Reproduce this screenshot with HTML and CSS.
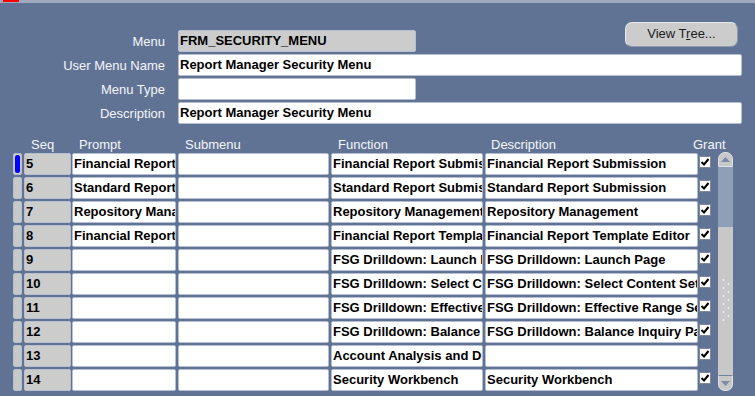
FILE: index.html
```html
<!DOCTYPE html>
<html lang="en">
<head>
    <meta charset="UTF-8">
    <title>Menus</title>
    <link rel="stylesheet" href="styles.css">
</head>
<body>

    <div class="titlebar"><span class="close-mark"></span></div>

    <div class="form">
        <div class="top-row">
            <div class="field-row">
                <span class="label">Menu</span>
                <div class="field short readonly">FRM_SECURITY_MENU</div>
            </div>
            <button class="tree-btn">View T<u>r</u>ee...</button>
        </div>
        <div class="field-row">
            <span class="label">User Menu Name</span>
            <div class="field long">Report Manager Security Menu</div>
        </div>
        <div class="field-row">
            <span class="label">Menu Type</span>
            <div class="field short"></div>
        </div>
        <div class="field-row">
            <span class="label">Description</span>
            <div class="field long">Report Manager Security Menu</div>
        </div>
    </div>

    <div class="grid">
        <div class="grid-head">
            <span class="h-ind"></span>
            <span class="h-seq">Seq</span>
            <span class="h-prompt">Prompt</span>
            <span class="h-submenu">Submenu</span>
            <span class="h-function">Function</span>
            <span class="h-desc">Description</span>
            <span class="h-grant">Grant</span>
        </div>

        <div class="grid-body">
            <div class="rows">
                <div class="row current">
                    <div class="ind"></div>
                    <div class="cell seq">5</div>
                    <div class="cell prompt">Financial Report Submission</div>
                    <div class="cell submenu"></div>
                    <div class="cell function">Financial Report Submission</div>
                    <div class="cell desc">Financial Report Submission</div>
                    <div class="grant"><svg width="12" height="12" viewBox="0 0 12 12"><rect x="0.5" y="0.5" width="11" height="11" fill="#fff" stroke="#7d8797"/><path d="M2.5 6 L5 8.5 L9.5 3" fill="none" stroke="#000" stroke-width="2"/></svg></div>
                </div>
                <div class="row">
                    <div class="ind"></div>
                    <div class="cell seq">6</div>
                    <div class="cell prompt">Standard Report Submission</div>
                    <div class="cell submenu"></div>
                    <div class="cell function">Standard Report Submission</div>
                    <div class="cell desc">Standard Report Submission</div>
                    <div class="grant"><svg width="12" height="12" viewBox="0 0 12 12"><rect x="0.5" y="0.5" width="11" height="11" fill="#fff" stroke="#7d8797"/><path d="M2.5 6 L5 8.5 L9.5 3" fill="none" stroke="#000" stroke-width="2"/></svg></div>
                </div>
                <div class="row">
                    <div class="ind"></div>
                    <div class="cell seq">7</div>
                    <div class="cell prompt">Repository Management</div>
                    <div class="cell submenu"></div>
                    <div class="cell function">Repository Management</div>
                    <div class="cell desc">Repository Management</div>
                    <div class="grant"><svg width="12" height="12" viewBox="0 0 12 12"><rect x="0.5" y="0.5" width="11" height="11" fill="#fff" stroke="#7d8797"/><path d="M2.5 6 L5 8.5 L9.5 3" fill="none" stroke="#000" stroke-width="2"/></svg></div>
                </div>
                <div class="row">
                    <div class="ind"></div>
                    <div class="cell seq">8</div>
                    <div class="cell prompt">Financial Report Template Editor</div>
                    <div class="cell submenu"></div>
                    <div class="cell function">Financial Report Template Editor</div>
                    <div class="cell desc">Financial Report Template Editor</div>
                    <div class="grant"><svg width="12" height="12" viewBox="0 0 12 12"><rect x="0.5" y="0.5" width="11" height="11" fill="#fff" stroke="#7d8797"/><path d="M2.5 6 L5 8.5 L9.5 3" fill="none" stroke="#000" stroke-width="2"/></svg></div>
                </div>
                <div class="row">
                    <div class="ind"></div>
                    <div class="cell seq">9</div>
                    <div class="cell prompt"></div>
                    <div class="cell submenu"></div>
                    <div class="cell function">FSG Drilldown: Launch Page</div>
                    <div class="cell desc">FSG Drilldown: Launch Page</div>
                    <div class="grant"><svg width="12" height="12" viewBox="0 0 12 12"><rect x="0.5" y="0.5" width="11" height="11" fill="#fff" stroke="#7d8797"/><path d="M2.5 6 L5 8.5 L9.5 3" fill="none" stroke="#000" stroke-width="2"/></svg></div>
                </div>
                <div class="row">
                    <div class="ind"></div>
                    <div class="cell seq">10</div>
                    <div class="cell prompt"></div>
                    <div class="cell submenu"></div>
                    <div class="cell function">FSG Drilldown: Select Content Set</div>
                    <div class="cell desc">FSG Drilldown: Select Content Set</div>
                    <div class="grant"><svg width="12" height="12" viewBox="0 0 12 12"><rect x="0.5" y="0.5" width="11" height="11" fill="#fff" stroke="#7d8797"/><path d="M2.5 6 L5 8.5 L9.5 3" fill="none" stroke="#000" stroke-width="2"/></svg></div>
                </div>
                <div class="row">
                    <div class="ind"></div>
                    <div class="cell seq">11</div>
                    <div class="cell prompt"></div>
                    <div class="cell submenu"></div>
                    <div class="cell function">FSG Drilldown: Effective Range Selection</div>
                    <div class="cell desc">FSG Drilldown: Effective Range Selection</div>
                    <div class="grant"><svg width="12" height="12" viewBox="0 0 12 12"><rect x="0.5" y="0.5" width="11" height="11" fill="#fff" stroke="#7d8797"/><path d="M2.5 6 L5 8.5 L9.5 3" fill="none" stroke="#000" stroke-width="2"/></svg></div>
                </div>
                <div class="row">
                    <div class="ind"></div>
                    <div class="cell seq">12</div>
                    <div class="cell prompt"></div>
                    <div class="cell submenu"></div>
                    <div class="cell function">FSG Drilldown: Balance Inquiry Page</div>
                    <div class="cell desc">FSG Drilldown: Balance Inquiry Page</div>
                    <div class="grant"><svg width="12" height="12" viewBox="0 0 12 12"><rect x="0.5" y="0.5" width="11" height="11" fill="#fff" stroke="#7d8797"/><path d="M2.5 6 L5 8.5 L9.5 3" fill="none" stroke="#000" stroke-width="2"/></svg></div>
                </div>
                <div class="row">
                    <div class="ind"></div>
                    <div class="cell seq">13</div>
                    <div class="cell prompt"></div>
                    <div class="cell submenu"></div>
                    <div class="cell function">Account Analysis and Drilldown</div>
                    <div class="cell desc"></div>
                    <div class="grant"><svg width="12" height="12" viewBox="0 0 12 12"><rect x="0.5" y="0.5" width="11" height="11" fill="#fff" stroke="#7d8797"/><path d="M2.5 6 L5 8.5 L9.5 3" fill="none" stroke="#000" stroke-width="2"/></svg></div>
                </div>
                <div class="row">
                    <div class="ind"></div>
                    <div class="cell seq">14</div>
                    <div class="cell prompt"></div>
                    <div class="cell submenu"></div>
                    <div class="cell function">Security Workbench</div>
                    <div class="cell desc">Security Workbench</div>
                    <div class="grant"><svg width="12" height="12" viewBox="0 0 12 12"><rect x="0.5" y="0.5" width="11" height="11" fill="#fff" stroke="#7d8797"/><path d="M2.5 6 L5 8.5 L9.5 3" fill="none" stroke="#000" stroke-width="2"/></svg></div>
                </div>
            </div>

            <div class="scrollbar">
                <div class="sb-up"><svg width="9" height="5" viewBox="0 0 9 5"><path d="M0 5 L4.5 0 L9 5 Z" fill="#7c8ca6"/></svg></div>
                <div class="sb-track"></div>
                <div class="sb-thumb">
                    <svg width="8" height="46" viewBox="0 0 8 46">
                        <g fill="#eef0f4">
                            <circle cx="1.5" cy="2" r="1"/><circle cx="6.5" cy="6" r="1"/>
                            <circle cx="1.5" cy="10" r="1"/><circle cx="6.5" cy="14" r="1"/>
                            <circle cx="1.5" cy="18" r="1"/><circle cx="6.5" cy="22" r="1"/>
                            <circle cx="1.5" cy="26" r="1"/><circle cx="6.5" cy="30" r="1"/>
                            <circle cx="1.5" cy="34" r="1"/><circle cx="6.5" cy="38" r="1"/>
                            <circle cx="1.5" cy="42" r="1"/>
                        </g>
                    </svg>
                </div>
                <div class="sb-down"><svg width="9" height="5" viewBox="0 0 9 5"><path d="M0 0 L9 0 L4.5 5 Z" fill="#7c8ca6"/></svg></div>
            </div>
        </div>
    </div>

</body>
</html>
```

FILE: styles.css
```css
body {
    margin: 0;
    width: 755px;
    height: 396px;
    overflow: hidden;
    background-color: #617394;
    font-family: "Liberation Sans", Arial, sans-serif;
    font-size: 13px;
    color: #fff;
}
.titlebar {
    height: 3px;
    padding-left: 3px;
    background-color: #9eaabb;
}
.close-mark {
    display: block;
    width: 16px;
    height: 2px;
    background-color: #f00;
}
.form {
    padding-top: 19px;
}
.top-row {
    display: flex;
    align-items: flex-start;
}
.top-row .field-row {
    margin-top: 8px;
}
.field-row {
    display: flex;
    align-items: center;
    height: 22px;
    margin-top: 2px;
}
.label {
    width: 165px;
    margin-right: 13px;
    text-align: right;
    color: #f4f6f8;
}
.field {
    box-sizing: border-box;
    height: 22px;
    padding: 0 1px;
    line-height: 20px;
    background-color: #fff;
    border: 1px solid #b4bfcf;
    border-radius: 2px;
    color: #000;
    font-weight: bold;
    white-space: nowrap;
    overflow: hidden;
}
.field.short {
    width: 238px;
}
.field.long {
    width: 564px;
}
.field.readonly {
    background-color: #cccccc;
}
.tree-btn {
    box-sizing: border-box;
    width: 113px;
    height: 25px;
    margin-left: auto;
    margin-right: 17px;
    padding: 0 0 3px;
    background-color: #cccccc;
    border: 1px solid #e6e8ec;
    border-right-color: #8d99ac;
    border-bottom-color: #8d99ac;
    border-radius: 7px;
    font-family: "Liberation Sans", Arial, sans-serif;
    font-size: 13px;
    color: #202020;
}

/* multi-row block */
.grid {
    margin-top: 13px;
}
.grid-head {
    display: flex;
    height: 15px;
    line-height: 15px;
    padding-left: 13px;
    margin-bottom: 1px;
    color: #f4f6f8;
    white-space: nowrap;
}
.grid-head span {
    box-sizing: border-box;
    padding-left: 7px;
}
.grid-head .h-ind {
    width: 9px;
    padding: 0;
}
.h-seq {
    width: 47px;
    margin-left: 2px;
}
.h-prompt {
    width: 104px;
    margin-left: 1px;
}
.h-submenu {
    width: 151px;
    margin-left: 2px;
}
.h-function {
    width: 152px;
    margin-left: 2px;
}
.grid-head .h-desc {
    width: 208px;
    margin-left: 2px;
    padding-left: 6px;
}
.grid-head .h-grant {
    padding-left: 0;
}
.grid-body {
    display: flex;
    align-items: flex-start;
}
.rows {
    padding-left: 13px;
}
.row {
    display: flex;
    height: 22px;
    margin-bottom: 2px;
}
.ind {
    box-sizing: border-box;
    width: 9px;
    height: 22px;
    background-color: #c8c8c8;
    border: 1px solid #b4bfcf;
    border-radius: 2px;
}
.row.current .ind {
    padding: 1px;
}
.row.current .ind::after {
    content: "";
    display: block;
    height: 100%;
    background-color: #0000ff;
    border-radius: 3px;
}
.cell {
    box-sizing: border-box;
    height: 22px;
    padding: 0 1px;
    line-height: 20px;
    background-color: #fff;
    border: 1px solid #b4bfcf;
    border-radius: 2px;
    color: #000;
    font-weight: bold;
    white-space: nowrap;
    overflow: hidden;
}
.cell.seq {
    width: 47px;
    margin-left: 2px;
    background-color: #cccccc;
}
.cell.prompt {
    width: 104px;
    margin-left: 1px;
}
.cell.submenu {
    width: 151px;
    margin-left: 2px;
}
.cell.function {
    width: 152px;
    margin-left: 2px;
}
.cell.desc {
    width: 213px;
    margin-left: 2px;
}
.grant {
    width: 13px;
    margin-left: 1px;
    padding-top: 3px;
}
.grant svg {
    display: block;
}

/* vertical scrollbar */
.scrollbar {
    display: flex;
    flex-direction: column;
    width: 15px;
    margin-left: 6px;
    margin-top: -1px;
}
.sb-up,
.sb-down {
    box-sizing: border-box;
    display: flex;
    align-items: center;
    justify-content: center;
    background-color: #c8c8c8;
    border: 1px solid #dde1e8;
}
.sb-up {
    height: 15px;
    border-radius: 7px 7px 0 0;
}
.sb-down {
    height: 16px;
    border-top: 1px solid #6f83a3;
    border-radius: 0 0 7px 7px;
}
.sb-track {
    height: 60px;
    background-color: #8f9fb8;
}
.sb-thumb {
    display: flex;
    align-items: center;
    justify-content: center;
    height: 148px;
    background-color: #c8c8c8;
}
```
